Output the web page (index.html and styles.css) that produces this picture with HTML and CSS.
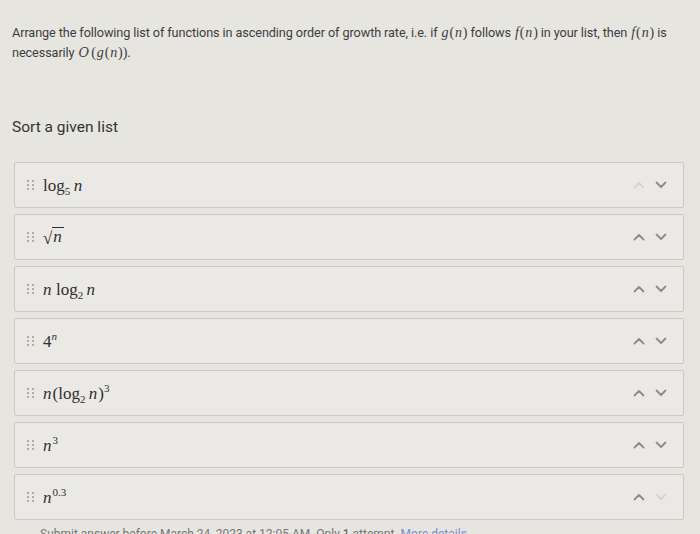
FILE: index.html
```html
<!DOCTYPE html>
<html lang="en">
<head>
<meta charset="utf-8">
<title>Sort a given list</title>
<link rel="stylesheet" href="styles.css">
</head>
<body>
<div class="page">
  <p class="question">Arrange the following list of functions in ascending order of growth rate, i.e. if <span class="m"><i>g</i>(<i>n</i>)</span> follows <span class="m"><i>f</i>(<i>n</i>)</span> in your list, then <span class="m"><i>f</i>(<i>n</i>)</span> is necessarily <span class="m"><i class="bigo">O</i>&#8202;(<i>g</i>(<i>n</i>))</span>.</p>
  <h2 class="title">Sort a given list</h2>
  <ul class="list">
    <li class="item">
      <span class="handle"><i></i><i></i><i></i><i></i><i></i><i></i></span>
      <span class="math">log<sub>5</sub>&#8201;<i>n</i></span>
      <span class="arrows"><svg class="chev off" viewBox="0 0 12 8"><polyline points="1.5,6.5 6,2 10.5,6.5"/></svg><svg class="chev" viewBox="0 0 12 8"><polyline points="1.5,1.5 6,6 10.5,1.5"/></svg></span>
    </li>
    <li class="item">
      <span class="handle"><i></i><i></i><i></i><i></i><i></i><i></i></span>
      <span class="math"><span class="sqrt">√<span class="rad"><i>n</i></span></span></span>
      <span class="arrows"><svg class="chev" viewBox="0 0 12 8"><polyline points="1.5,6.5 6,2 10.5,6.5"/></svg><svg class="chev" viewBox="0 0 12 8"><polyline points="1.5,1.5 6,6 10.5,1.5"/></svg></span>
    </li>
    <li class="item">
      <span class="handle"><i></i><i></i><i></i><i></i><i></i><i></i></span>
      <span class="math"><i>n</i>&#8201;log<sub>2</sub>&#8201;<i>n</i></span>
      <span class="arrows"><svg class="chev" viewBox="0 0 12 8"><polyline points="1.5,6.5 6,2 10.5,6.5"/></svg><svg class="chev" viewBox="0 0 12 8"><polyline points="1.5,1.5 6,6 10.5,1.5"/></svg></span>
    </li>
    <li class="item">
      <span class="handle"><i></i><i></i><i></i><i></i><i></i><i></i></span>
      <span class="math">4<sup><i>n</i></sup></span>
      <span class="arrows"><svg class="chev" viewBox="0 0 12 8"><polyline points="1.5,6.5 6,2 10.5,6.5"/></svg><svg class="chev" viewBox="0 0 12 8"><polyline points="1.5,1.5 6,6 10.5,1.5"/></svg></span>
    </li>
    <li class="item">
      <span class="handle"><i></i><i></i><i></i><i></i><i></i><i></i></span>
      <span class="math"><i>n</i>(log<sub>2</sub>&#8201;<i>n</i>)<sup>3</sup></span>
      <span class="arrows"><svg class="chev" viewBox="0 0 12 8"><polyline points="1.5,6.5 6,2 10.5,6.5"/></svg><svg class="chev" viewBox="0 0 12 8"><polyline points="1.5,1.5 6,6 10.5,1.5"/></svg></span>
    </li>
    <li class="item">
      <span class="handle"><i></i><i></i><i></i><i></i><i></i><i></i></span>
      <span class="math"><i>n</i><sup>3</sup></span>
      <span class="arrows"><svg class="chev" viewBox="0 0 12 8"><polyline points="1.5,6.5 6,2 10.5,6.5"/></svg><svg class="chev" viewBox="0 0 12 8"><polyline points="1.5,1.5 6,6 10.5,1.5"/></svg></span>
    </li>
    <li class="item">
      <span class="handle"><i></i><i></i><i></i><i></i><i></i><i></i></span>
      <span class="math"><i>n</i><sup>0.3</sup></span>
      <span class="arrows"><svg class="chev" viewBox="0 0 12 8"><polyline points="1.5,6.5 6,2 10.5,6.5"/></svg><svg class="chev off" viewBox="0 0 12 8"><polyline points="1.5,1.5 6,6 10.5,1.5"/></svg></span>
    </li>
  </ul>
  <p class="foot">Submit answer before March 24, 2023 at 12:05 AM. Only <b>1</b> attempt. <a class="more">More details</a></p>
</div>
</body>
</html>
```

FILE: styles.css
```css
html, body {
  margin: 0;
  padding: 0;
}
body {
  background: #e7e5e0;
  font-family: Roboto, "Liberation Sans", Arial, sans-serif;
  color: #3b3b3b;
  overflow: hidden;
}
.page {
  padding: 23px 16px 0 12px;
}
.question {
  margin: 0;
  font-size: 12.7px;
  line-height: 20px;
  letter-spacing: -0.1px;
  color: #3d3d3d;
}
.m {
  font-family: "Liberation Serif", "DejaVu Serif", serif;
  font-size: 14px;
  line-height: 1;
}
.m i {
  font-style: italic;
  padding: 0 1px;
}
.bigo {
  font-family: "DejaVu Serif", serif;
  font-size: 13px;
}
.title {
  margin: 54px 0 0;
  font-size: 15.5px;
  line-height: 20px;
  font-weight: 400;
  color: #333;
}
.list {
  list-style: none;
  margin: 25px 0 0;
  padding: 0 0 0 2px;
  display: flex;
  flex-direction: column;
  gap: 6px;
}
.item {
  height: 44px;
  border: 1px solid #cbc9c4;
  border-radius: 2px;
  background: #ebe9e5;
  display: flex;
  align-items: center;
  padding: 0 16px 0 12px;
}
.handle {
  display: grid;
  grid-template-columns: 2px 2px;
  grid-auto-rows: 2px;
  column-gap: 3px;
  row-gap: 2px;
  margin-right: 9px;
}
.handle i {
  display: block;
  width: 2px;
  height: 2px;
  background: #9a9893;
  border-radius: 1px;
}
.math {
  font-family: "Liberation Serif", "DejaVu Serif", serif;
  font-size: 17px;
  color: #2f2f2f;
  flex: 1;
  line-height: 1;
}
.math i {
  font-style: italic;
  padding-right: 1px;
}
.math sub {
  font-size: 11px;
  vertical-align: -4px;
  line-height: 0;
}
.math sup {
  font-size: 11px;
  vertical-align: 7px;
  line-height: 0;
}
.sqrt {
  display: inline-flex;
  align-items: flex-end;
}
.rad {
  border-top: 1px solid #2f2f2f;
  padding: 0 1px;
  line-height: 1.1;
}
.arrows {
  display: flex;
  gap: 10px;
  align-items: center;
}
.chev {
  width: 12px;
  height: 8px;
  fill: none;
  stroke: #8e8c88;
  stroke-width: 1.8;
  stroke-linecap: round;
  stroke-linejoin: round;
}
.chev.off {
  stroke: #d6d4cf;
}
.foot {
  margin: 6px 0 0 28px;
  font-size: 12px;
  line-height: 16px;
  color: #777;
}
.foot b {
  font-weight: 400;
  color: #555;
}
.more {
  color: #7a8fd0;
}
```
